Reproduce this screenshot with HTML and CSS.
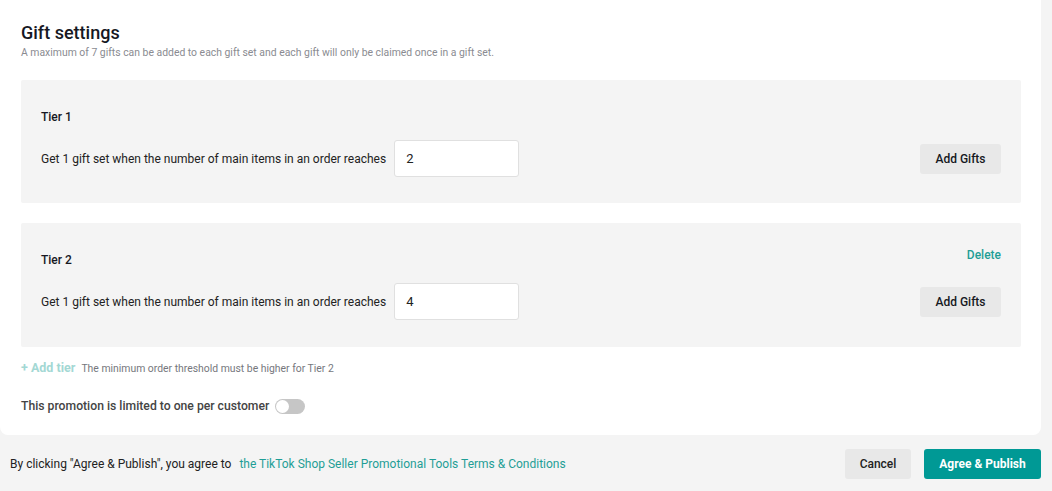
FILE: index.html
```html
<!DOCTYPE html>
<html lang="en">
<head>
  <meta charset="UTF-8">
  <title>Gift settings</title>
  <link rel="stylesheet" href="styles.css">
</head>
<body>
  <div class="card">
    <h2 class="title">Gift settings</h2>
    <p class="subtitle">A maximum of 7 gifts can be added to each gift set and each gift will only be claimed once in a gift set.</p>

    <div class="tier">
      <div class="tier-head">
        <span class="tier-name">Tier 1</span>
      </div>
      <div class="tier-row">
        <span class="tier-text">Get 1 gift set when the number of main items in an order reaches</span>
        <input class="qty" type="text" value="2">
        <button class="add-gifts">Add Gifts</button>
      </div>
    </div>

    <div class="tier tier-del">
      <div class="tier-head">
        <span class="tier-name">Tier 2</span>
        <a class="delete-link">Delete</a>
      </div>
      <div class="tier-row">
        <span class="tier-text">Get 1 gift set when the number of main items in an order reaches</span>
        <input class="qty" type="text" value="4">
        <button class="add-gifts">Add Gifts</button>
      </div>
    </div>

    <div class="add-tier">
      <span class="add-tier-link">+ Add tier</span>
      <span class="add-tier-hint">The minimum order threshold must be higher for Tier 2</span>
    </div>

    <div class="limit-row">
      <span>This promotion is limited to one per customer</span>
      <span class="switch"><span class="knob"></span></span>
    </div>
  </div>

  <div class="footer">
    <div class="terms">
      By clicking "Agree &amp; Publish", you agree to <a class="terms-link">the TikTok Shop Seller Promotional Tools Terms &amp; Conditions</a>
    </div>
    <div class="actions">
      <button class="btn-cancel">Cancel</button>
      <button class="btn-publish">Agree &amp; Publish</button>
    </div>
  </div>
</body>
</html>
```

FILE: styles.css
```css
body {
  margin: 0;
  font-family: Roboto, 'Liberation Sans', sans-serif;
  background: #f4f4f4;
  color: #222;
}
.card {
  background: white;
  width: 1041px;
  box-sizing: border-box;
  padding: 21px 20px 21px 21px;
  border-radius: 0 0 8px 8px;
}
.title {
  margin: 0;
  font-size: 18px;
  line-height: 24px;
  font-weight: 500;
  color: #161823;
}
.subtitle {
  margin: 0;
  font-size: 10.4px;
  line-height: 16px;
  color: #8a8b91;
}
.tier {
  background: #f4f4f4;
  margin-top: 19px;
  padding: 29px 20px 26px 20px;
  border-radius: 2px;
}
.tier + .tier {
  margin-top: 20px;
}
.tier-del {
  padding-top: 24px;
  padding-bottom: 27px;
}
.tier-head {
  display: flex;
  justify-content: space-between;
  align-items: flex-end;
}
.tier-name {
  font-size: 12px;
  line-height: 16px;
  font-weight: 500;
  color: #161823;
}
.delete-link {
  font-size: 12px;
  line-height: 16px;
  font-weight: 500;
  color: #1f9e96;
  cursor: pointer;
  margin-bottom: 5px;
}
.tier-row {
  display: flex;
  align-items: center;
  margin-top: 15px;
}
.tier-text {
  font-size: 12px;
  color: #222;
}
.qty {
  width: 125px;
  height: 37px;
  box-sizing: border-box;
  margin-left: 8px;
  padding: 0 11px;
  border: 1px solid #e0e0e0;
  border-radius: 3px;
  background: white;
  font-family: inherit;
  font-size: 13px;
  color: #222;
}
.add-gifts {
  margin-left: auto;
  width: 81px;
  height: 30px;
  border: none;
  border-radius: 3px;
  background: #e8e8e8;
  font-family: inherit;
  font-size: 12px;
  font-weight: 500;
  color: #161823;
  cursor: pointer;
}
.add-tier {
  display: flex;
  align-items: baseline;
  gap: 6px;
  margin-top: 13px;
  line-height: 16px;
}
.add-tier-link {
  font-size: 12.5px;
  font-weight: 700;
  color: #a3d8d4;
}
.add-tier-hint {
  font-size: 10.4px;
  color: #76777d;
}
.limit-row {
  display: flex;
  align-items: center;
  gap: 6px;
  margin-top: 21px;
  font-size: 12.2px;
  line-height: 16px;
  font-weight: 500;
  color: #444;
}
.switch {
  display: flex;
  align-items: center;
  width: 30px;
  height: 15px;
  border-radius: 8px;
  background: #c6c6c6;
  padding: 1px;
  box-sizing: border-box;
}
.knob {
  width: 13px;
  height: 13px;
  border-radius: 50%;
  background: white;
}
.footer {
  display: flex;
  align-items: center;
  justify-content: space-between;
  width: 1041px;
  height: 57px;
  padding: 0 0 0 10px;
  box-sizing: border-box;
}
.terms {
  font-size: 12px;
  color: #222;
}
.terms-link {
  margin-left: 5px;
  color: #1f9e96;
  cursor: pointer;
}
.actions {
  display: flex;
  gap: 13px;
}
.btn-cancel,
.btn-publish {
  height: 30px;
  border: none;
  border-radius: 3px;
  font-family: inherit;
  font-size: 12px;
  font-weight: 500;
  cursor: pointer;
}
.btn-cancel {
  width: 66px;
  background: #e8e8e8;
  color: #222;
}
.btn-publish {
  width: 117px;
  background: #009995;
  color: white;
  font-weight: 700;
}
```
